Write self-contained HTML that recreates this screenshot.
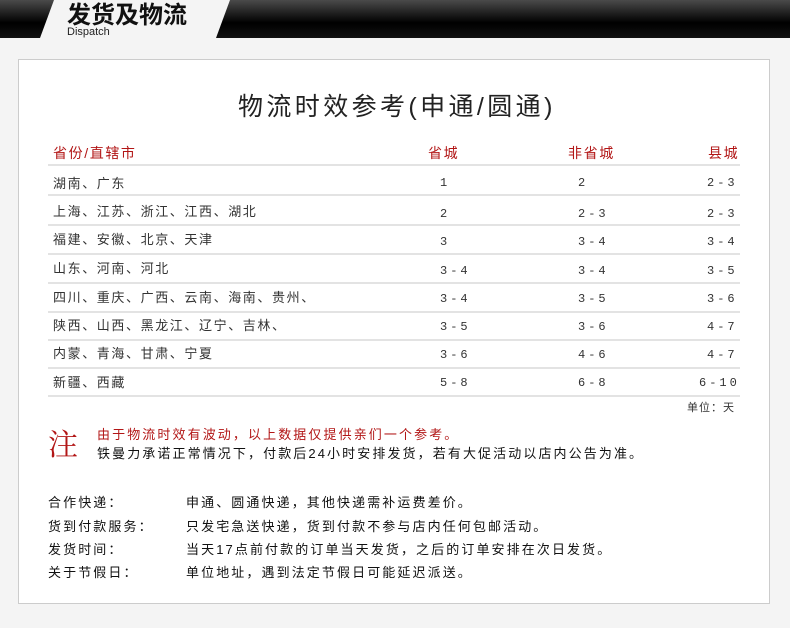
<!DOCTYPE html>
<html><head><meta charset="utf-8"><style>
body{margin:0;width:790px;height:628px;background:#f4f4f4;position:relative;overflow:hidden;font-family:"Liberation Sans","Noto Sans CJK SC",sans-serif;color:#333}
.hdr{position:absolute;left:0;top:0;width:790px;height:38px;background:linear-gradient(#4a4a4a,#000 60%,#111)}
.tab{position:absolute;left:40px;top:0;width:190px;height:38px;background:#f4f4f4;clip-path:polygon(14px 0,190px 0,176px 38px,0 38px)}
.box{position:absolute;left:18px;top:59px;width:752px;height:545px;background:#fff;border:1px solid #ccc;box-sizing:border-box}
.a{position:absolute;white-space:nowrap}
.line{position:absolute;left:48px;width:692px;height:2px;background:#e3e3e3}
.t{font-size:13px;color:#333;letter-spacing:1.6px}
.n{font-family:"Liberation Mono",monospace;font-size:12px;letter-spacing:3px;color:#333}
.r{color:#b21616}
.b{letter-spacing:2.1px;color:#111}
</style></head><body>
<div class="hdr"></div><div class="tab"></div>
<div class="a" style="left:67px;top:-5px;font-size:24px;font-weight:bold;color:#111">发货及物流</div>
<div class="a" style="left:67px;top:26px;font-size:11px;color:#222">Dispatch</div>
<div class="box"></div>
<div class="a" style="left:238px;top:87px;font-size:25px;color:#222;letter-spacing:3.4px">物流时效参考(申通/圆通)</div>
<div class="a t r" style="left:53px;top:143px;font-size:14px">省份/直辖市</div>
<div class="a t r" style="left:428px;top:143px;font-size:14px">省城</div>
<div class="a t r" style="left:568px;top:143px;font-size:14px">非省城</div>
<div class="a t r" style="left:708px;top:143px;font-size:14px">县城</div>
<div class="line" style="top:164px"></div>
<div class="line" style="top:194px"></div>
<div class="line" style="top:224px"></div>
<div class="line" style="top:253px"></div>
<div class="line" style="top:282px"></div>
<div class="line" style="top:311px"></div>
<div class="line" style="top:339px"></div>
<div class="line" style="top:367px"></div>
<div class="line" style="top:395px"></div>
<div class="a t" style="left:53px;top:173px">湖南、广东</div><div class="a n" style="left:440px;top:176px">1</div><div class="a n" style="left:578px;top:176px">2</div><div class="a n" style="left:707px;top:176px">2-3</div>
<div class="a t" style="left:53px;top:201px">上海、江苏、浙江、江西、湖北</div><div class="a n" style="left:440px;top:207px">2</div><div class="a n" style="left:578px;top:207px">2-3</div><div class="a n" style="left:707px;top:207px">2-3</div>
<div class="a t" style="left:53px;top:229px">福建、安徽、北京、天津</div><div class="a n" style="left:440px;top:235px">3</div><div class="a n" style="left:578px;top:235px">3-4</div><div class="a n" style="left:707px;top:235px">3-4</div>
<div class="a t" style="left:53px;top:258px">山东、河南、河北</div><div class="a n" style="left:440px;top:264px">3-4</div><div class="a n" style="left:578px;top:264px">3-4</div><div class="a n" style="left:707px;top:264px">3-5</div>
<div class="a t" style="left:53px;top:287px">四川、重庆、广西、云南、海南、贵州、</div><div class="a n" style="left:440px;top:292px">3-4</div><div class="a n" style="left:578px;top:292px">3-5</div><div class="a n" style="left:707px;top:292px">3-6</div>
<div class="a t" style="left:53px;top:315px">陕西、山西、黑龙江、辽宁、吉林、</div><div class="a n" style="left:440px;top:320px">3-5</div><div class="a n" style="left:578px;top:320px">3-6</div><div class="a n" style="left:707px;top:320px">4-7</div>
<div class="a t" style="left:53px;top:343px">内蒙、青海、甘肃、宁夏</div><div class="a n" style="left:440px;top:348px">3-6</div><div class="a n" style="left:578px;top:348px">4-6</div><div class="a n" style="left:707px;top:348px">4-7</div>
<div class="a t" style="left:53px;top:372px">新疆、西藏</div><div class="a n" style="left:440px;top:376px">5-8</div><div class="a n" style="left:578px;top:376px">6-8</div><div class="a n" style="left:699px;top:376px">6-10</div>
<div class="a" style="left:687px;top:399px;font-size:11px;color:#333;letter-spacing:1px">单位：天</div>
<div class="a r" style="left:48px;top:420px;font-size:30px;font-family:'Noto Serif CJK SC',serif">注</div>
<div class="a t r" style="left:97px;top:424px;letter-spacing:2.1px">由于物流时效有波动，以上数据仅提供亲们一个参考。</div>
<div class="a t b" style="left:97px;top:443px">铁曼力承诺正常情况下，付款后24小时安排发货，若有大促活动以店内公告为准。</div>
<div class="a t b" style="left:48px;top:492px">合作快递：</div><div class="a t b" style="left:186px;top:492px">申通、圆通快递，其他快递需补运费差价。</div>
<div class="a t b" style="left:48px;top:516px">货到付款服务：</div><div class="a t b" style="left:186px;top:516px">只发宅急送快递，货到付款不参与店内任何包邮活动。</div>
<div class="a t b" style="left:48px;top:539px">发货时间：</div><div class="a t b" style="left:186px;top:539px">当天17点前付款的订单当天发货，之后的订单安排在次日发货。</div>
<div class="a t b" style="left:48px;top:562px">关于节假日：</div><div class="a t b" style="left:186px;top:562px">单位地址，遇到法定节假日可能延迟派送。</div>
</body></html>
